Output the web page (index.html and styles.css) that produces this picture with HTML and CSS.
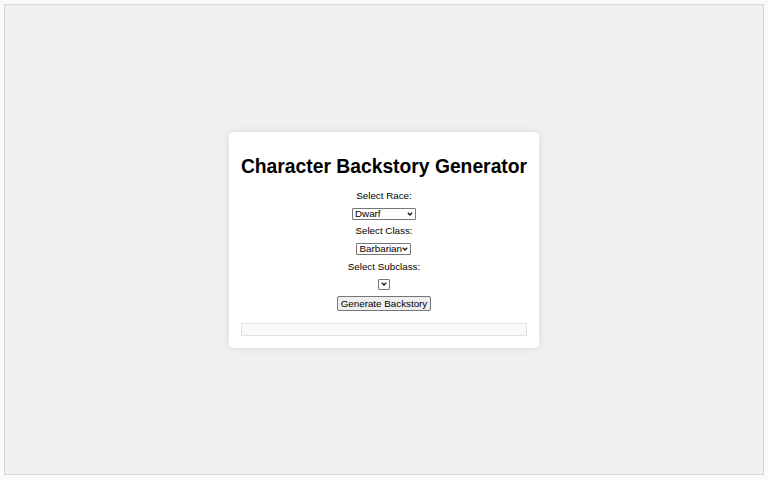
FILE: index.html
```html
<!DOCTYPE html>
<html lang="en">
<head>
  <meta charset="UTF-8">
  <meta name="viewport" content="width=device-width, initial-scale=1.0">
  <title>Character Backstory Generator</title>
  <link rel="stylesheet" href="styles.css">
</head>
<body>
  <div class="card">
    <h1>Character Backstory Generator</h1>

    <label for="race">Select Race:</label>
    <span class="pick pick-race">
      <select id="race">
        <option>Dwarf</option>
        <option>Elf</option>
        <option>Halfling</option>
        <option>Human</option>
        <option>Dragonborn</option>
        <option>Gnome</option>
        <option>Half-Elf</option>
        <option>Half-Orc</option>
        <option>Tiefling</option>
      </select>
      <svg class="chev" viewBox="0 0 6 4"><path d="M0.8 0.8 L3 3 L5.2 0.8"/></svg>
    </span>

    <label for="class">Select Class:</label>
    <span class="pick pick-class">
      <select id="class">
        <option>Barbarian</option>
        <option>Bard</option>
        <option>Cleric</option>
        <option>Druid</option>
        <option>Fighter</option>
        <option>Monk</option>
        <option>Paladin</option>
        <option>Ranger</option>
        <option>Rogue</option>
        <option>Sorcerer</option>
        <option>Warlock</option>
        <option>Wizard</option>
      </select>
      <svg class="chev" viewBox="0 0 6 4"><path d="M0.8 0.8 L3 3 L5.2 0.8"/></svg>
    </span>

    <label for="subclass">Select Subclass:</label>
    <span class="pick pick-sub">
      <select id="subclass"></select>
      <svg class="chev" viewBox="0 0 6 4"><path d="M0.8 0.8 L3 3 L5.2 0.8"/></svg>
    </span>

    <button id="generate">Generate Backstory</button>

    <div id="backstory" class="output"></div>
  </div>
</body>
</html>
```

FILE: styles.css
```css
html {
  background-color: #fafafa;
}
body {
  margin: 4px;
  height: 469px;
  border: 1px solid #d9d9d9;
  background-color: #f0f0f0;
  font-family: "Liberation Sans", Arial, sans-serif;
  display: flex;
  justify-content: center;
  align-items: center;
}
.card {
  background-color: #fff;
  padding: 12px;
  border-radius: 5px;
  box-shadow: 0 0 8px rgba(0, 0, 0, 0.1);
  text-align: center;
}
h1 {
  font-size: 19.3px;
  line-height: 22px;
  margin: 12px 0 12px;
  color: #000;
}
label {
  display: block;
  font-size: 9.8px;
  line-height: 11px;
  margin-bottom: 7px;
  color: #000;
}

/* select with drawn chevron */
.pick {
  display: block;
  position: relative;
  margin: 0 auto 5px;
  height: 12px;
}
.pick-race { width: 64px; }
.pick-class { width: 55px; margin-bottom: 6px; }
.pick-sub { width: 12px; height: 11px; margin-bottom: 6px; }
.pick select {
  appearance: none;
  -webkit-appearance: none;
  display: block;
  box-sizing: border-box;
  width: 100%;
  height: 100%;
  margin: 0;
  padding: 0 0 0 2px;
  border: 1px solid #767676;
  border-radius: 1px;
  background-color: #fff;
  color: #000;
  font-family: "Liberation Sans", Arial, sans-serif;
  font-size: 9.8px;
  line-height: 10px;
}
.chev {
  position: absolute;
  right: 3px;
  top: 4px;
  width: 6px;
  height: 4px;
  fill: none;
  stroke: #111;
  stroke-width: 1.3;
  pointer-events: none;
}
.pick-sub .chev {
  right: 3px;
  top: 3.5px;
}

button {
  display: block;
  box-sizing: border-box;
  margin: 0 auto;
  width: 94px;
  height: 15px;
  padding: 0;
  border: 1px solid #767676;
  border-radius: 2px;
  background-color: #efefef;
  color: #000;
  font-family: "Liberation Sans", Arial, sans-serif;
  font-size: 9.8px;
}
.output {
  margin-top: 12px;
  height: 11px;
  border: 1px solid #e2e2e2;
  background-color: #f9f9f9;
}
```
